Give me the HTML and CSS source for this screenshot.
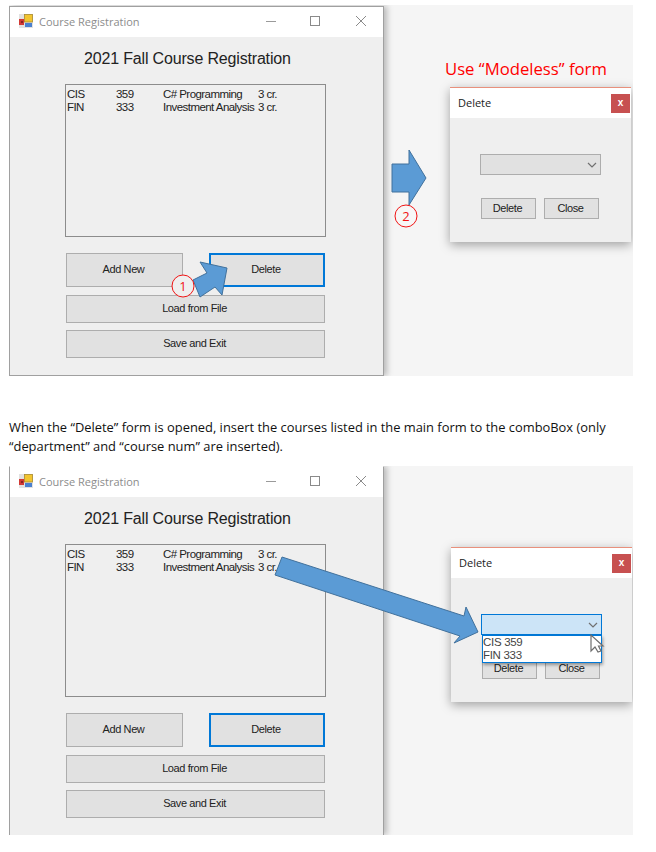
FILE: index.html
```html
<!DOCTYPE html>
<html lang="en">
<head>
    <meta charset="UTF-8">
    <title>Course Registration</title>
    <link rel="stylesheet" href="styles.css">
</head>
<body>
<div class="page">
    <section class="shot shot-top">
        <div class="window">
            <div class="titlebar">
                <svg class="app-icon" width="14" height="14" viewBox="0 0 14 14">
                    <rect x="0" y="0" width="14" height="14" fill="#e2e2e2"/>
                    <rect x="0" y="5" width="5" height="6" fill="#d23a34"/>
                    <rect x="2" y="7" width="2" height="2" fill="#8a2420"/>
                    <rect x="5.5" y="0.5" width="8" height="7.5" fill="#f2c530" stroke="#a98a30" stroke-width="0.8"/>
                    <rect x="6" y="9" width="7" height="4" fill="#4a80cf"/>
                </svg>
                <span class="title-text">Course Registration</span>
                <span class="win-controls">
                    <svg width="100" height="12" viewBox="0 0 100 12">
                        <path d="M0 6.5H10" stroke="#9a9a9a" fill="none"/>
                        <rect x="44.5" y="1.5" width="9" height="9" stroke="#8a8a8a" fill="none"/>
                        <path d="M90 1L100 11M100 1L90 11" stroke="#8a8a8a" fill="none"/>
                    </svg>
                </span>
            </div>
            <div class="form-body">
                <h1 class="form-title">2021 Fall Course Registration</h1>
                <div class="listbox">
                    <div class="list-row"><span>CIS</span><span>359</span><span>C# Programming</span><span>3 cr.</span></div>
                    <div class="list-row"><span>FIN</span><span>333</span><span>Investment Analysis</span><span>3 cr.</span></div>
                </div>
                <div class="btn-row">
                    <button class="btn btn-half">Add New</button>
                    <button class="btn btn-half btn-focus">Delete</button>
                </div>
                <button class="btn btn-wide">Load from File</button>
                <button class="btn btn-wide">Save and Exit</button>
            </div>
        </div>
        <div class="side">
            <div class="caption">Use “Modeless” form</div>
            <div class="dialog">
                <div class="dialog-title"><span class="dialog-name">Delete</span><span class="dialog-close">x</span></div>
                <div class="dialog-body">
                    <div class="combo">
                        <svg width="10" height="6" viewBox="0 0 10 6"><path d="M1 1L5 5L9 1" stroke="#707070" stroke-width="1.2" fill="none"/></svg>
                    </div>
                    <div class="dialog-btns">
                        <button class="btn btn-small">Delete</button>
                        <button class="btn btn-small">Close</button>
                    </div>
                </div>
            </div>
        </div>
        <svg class="overlay" width="624" height="371" viewBox="0 0 624 371">
            <path class="arrow" d="M191 257L218 263L213 290L206 282L191 292L184 275L198 268Z"/>
            <path class="arrow" d="M383 159H400V145L417 173L400 200V187H383Z"/>
            <circle class="badge" cx="174" cy="281" r="11"/>
            <text class="badge-num" x="174" y="286">1</text>
            <circle class="badge badge-light" cx="397" cy="211" r="11"/>
            <text class="badge-num" x="397" y="216">2</text>
        </svg>
    </section>

    <p class="note">When the “Delete” form is opened, insert the courses listed in the main form to the comboBox (only<br>“department” and “course num” are inserted).</p>

    <section class="shot shot-bottom">
        <div class="window window-open">
            <div class="titlebar">
                <svg class="app-icon" width="14" height="14" viewBox="0 0 14 14">
                    <rect x="0" y="0" width="14" height="14" fill="#e2e2e2"/>
                    <rect x="0" y="5" width="5" height="6" fill="#d23a34"/>
                    <rect x="2" y="7" width="2" height="2" fill="#8a2420"/>
                    <rect x="5.5" y="0.5" width="8" height="7.5" fill="#f2c530" stroke="#a98a30" stroke-width="0.8"/>
                    <rect x="6" y="9" width="7" height="4" fill="#4a80cf"/>
                </svg>
                <span class="title-text">Course Registration</span>
                <span class="win-controls">
                    <svg width="100" height="12" viewBox="0 0 100 12">
                        <path d="M0 6.5H10" stroke="#9a9a9a" fill="none"/>
                        <rect x="44.5" y="1.5" width="9" height="9" stroke="#8a8a8a" fill="none"/>
                        <path d="M90 1L100 11M100 1L90 11" stroke="#8a8a8a" fill="none"/>
                    </svg>
                </span>
            </div>
            <div class="form-body">
                <h1 class="form-title">2021 Fall Course Registration</h1>
                <div class="listbox">
                    <div class="list-row"><span>CIS</span><span>359</span><span>C# Programming</span><span>3 cr.</span></div>
                    <div class="list-row"><span>FIN</span><span>333</span><span>Investment Analysis</span><span>3 cr.</span></div>
                </div>
                <div class="btn-row">
                    <button class="btn btn-half">Add New</button>
                    <button class="btn btn-half btn-focus">Delete</button>
                </div>
                <button class="btn btn-wide">Load from File</button>
                <button class="btn btn-wide">Save and Exit</button>
            </div>
        </div>
        <div class="side side-low">
            <div class="dialog">
                <div class="dialog-title"><span class="dialog-name">Delete</span><span class="dialog-close">x</span></div>
                <div class="dialog-body">
                    <div class="combo combo-open">
                        <svg width="10" height="6" viewBox="0 0 10 6"><path d="M1 1L5 5L9 1" stroke="#707070" stroke-width="1.2" fill="none"/></svg>
                        <div class="combo-list">
                            <div>CIS 359</div>
                            <div>FIN 333</div>
                        </div>
                    </div>
                    <div class="dialog-btns">
                        <button class="btn btn-small">Delete</button>
                        <button class="btn btn-small">Close</button>
                    </div>
                </div>
            </div>
        </div>
        <svg class="overlay" width="624" height="369" viewBox="0 0 624 369">
            <path class="arrow" d="M273 91L266 109L451 170L445 177L469 166L457 141L455 150Z"/>
            <path class="cursor" d="M582 169V185L586 181L589 186L592 185L589.5 180L594 180Z"/>
        </svg>
    </section>
</div>
</body>
</html>
```

FILE: styles.css
```css
* {
    box-sizing: border-box;
}

body {
    margin: 0;
    background-color: #fff;
    font-family: "Liberation Sans", Arial, sans-serif;
}

.page {
    padding: 5px 0 0 9px;
    width: 656px;
}

.shot {
    position: relative;
    display: flex;
    align-items: flex-start;
    width: 624px;
    overflow: hidden;
    background-color: #f5f5f5;
}

.shot-top {
    height: 371px;
    padding-top: 1px;
}

.shot-bottom {
    height: 369px;
}

.overlay {
    position: absolute;
    left: 0;
    top: 0;
    z-index: 2;
}

.arrow {
    fill: #5b9bd5;
    stroke: #41719c;
    stroke-width: 1;
}

.badge {
    fill: #efefef;
    stroke: #f01414;
    stroke-width: 1;
}

.badge-light {
    fill: #f7f7f7;
}

.badge-num {
    fill: #f01414;
    font-family: "Open Sans", sans-serif;
    font-size: 13px;
    text-anchor: middle;
}

.cursor {
    fill: #fff;
    stroke: #6e6e6e;
    stroke-width: 1.2;
}

.note {
    margin: 42px 0 10px;
    color: #111;
    font-family: "Open Sans", sans-serif;
    font-size: 12.9px;
    line-height: 19px;
    white-space: nowrap;
}

/* main form */
.window {
    flex: none;
    width: 375px;
    height: 370px;
    background-color: #efefef;
    border: 1px solid #a0a0a0;
    box-shadow: 3px 0 6px rgba(0, 0, 0, 0.25);
}

.window-open {
    height: 369px;
    border-top-color: #fff;
    border-bottom: none;
}

.titlebar {
    display: flex;
    align-items: center;
    height: 30px;
    padding: 0 0 2px 9px;
    background-color: #fff;
}

.title-text {
    margin-left: 6px;
    color: #8c8c8c;
    font-family: "Open Sans", sans-serif;
    font-size: 11px;
}

.win-controls {
    display: flex;
    margin-left: auto;
    margin-right: 17px;
}

.form-body {
    padding: 0 58px 0 56px;
}

.form-title {
    margin: 10px 0 13px 18px;
    color: #222;
    font-size: 16px;
    font-weight: normal;
    line-height: 24px;
    letter-spacing: -0.17px;
    white-space: nowrap;
}

.listbox {
    width: 261px;
    height: 153px;
    margin-left: -1px;
    padding: 3px 2px 3px 1px;
    border: 1px solid #8c8c8c;
}

.list-row {
    display: grid;
    grid-template-columns: 49px 47px 95px auto;
    color: #222;
    font-size: 11.5px;
    line-height: 13px;
    letter-spacing: -0.55px;
    white-space: nowrap;
}

.btn {
    background-color: #e1e1e1;
    border: 1px solid #adadad;
    color: #222;
    font-family: "Liberation Sans", Arial, sans-serif;
    font-size: 11px;
    letter-spacing: -0.4px;
    padding: 0 2px 2px 0;
}

.btn-row {
    display: flex;
    justify-content: space-between;
    margin: 16px 0 8px;
}

.btn-half {
    width: 117px;
    height: 34px;
}

.btn-focus {
    width: 116px;
    border: 2px solid #0078d7;
}

.btn-wide {
    display: block;
    width: 259px;
    height: 28px;
    margin-bottom: 7px;
}

/* side: caption and the modeless form */
.side {
    padding: 53px 0 0 61px;
}

.side-low {
    padding: 81px 0 0 67px;
}

.caption {
    margin-bottom: 8px;
    color: #f00;
    font-family: "Open Sans", sans-serif;
    font-size: 16.7px;
    line-height: 20px;
    white-space: nowrap;
}

.dialog {
    width: 181px;
    height: 155px;
    margin-left: 5px;
    background-color: #efefef;
    border-top: 1px solid #e8907c;
    box-shadow: 0 3px 10px rgba(0, 0, 0, 0.35);
}

.side-low .dialog {
    margin-left: 0;
}

.dialog-title {
    display: flex;
    justify-content: space-between;
    align-items: center;
    height: 30px;
    padding: 0 1px 0 8px;
    background-color: #fff;
    color: #222;
    font-family: "Open Sans", sans-serif;
    font-size: 11px;
}

.dialog-name {
    padding-bottom: 2px;
}

.dialog-close {
    width: 19px;
    height: 19px;
    background-color: #c75050;
    color: #fff;
    font-family: "Liberation Sans", Arial, sans-serif;
    font-size: 10px;
    font-weight: bold;
    line-height: 18px;
    text-align: center;
}

.dialog-body {
    padding: 36px 0 0 30px;
}

.combo {
    position: relative;
    display: flex;
    justify-content: flex-end;
    align-items: center;
    width: 121px;
    height: 21px;
    padding-right: 3px;
    background-color: #e1e1e1;
    border: 1px solid #adadad;
}

.combo-open {
    background-color: #cce4f7;
    border-color: #0078d7;
}

.combo-list {
    position: absolute;
    left: 0;
    top: 20px;
    width: 120px;
    height: 28px;
    background-color: #fff;
    border: 1px solid #0078d7;
    box-shadow: 1px 2px 3px rgba(0, 0, 0, 0.35);
    color: #444;
    font-size: 11.5px;
    line-height: 13px;
    letter-spacing: -0.3px;
    z-index: 1;
}

.dialog-btns {
    display: flex;
    gap: 8px;
    margin: 23px 0 0 1px;
}

.btn-small {
    width: 55px;
    height: 21px;
}
```
